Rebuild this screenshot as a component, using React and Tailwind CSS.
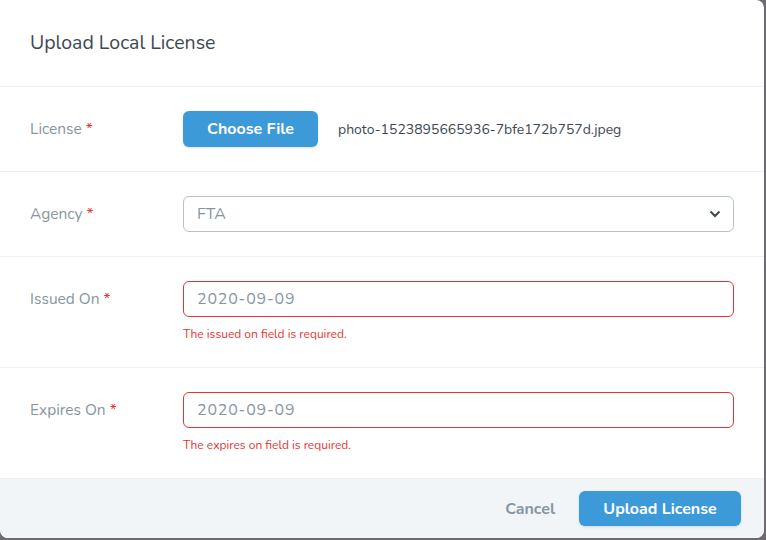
import React from "react";

const font = { fontFamily: "Nunito, Lato, 'Open Sans', sans-serif" };

const Label = ({ children }) => (
  <div className="w-[153px] shrink-0 text-[15.5px] text-[#8795a1]">
    {children} <span className="text-[#e3342f]">*</span>
  </div>
);

const DateField = ({ label, error }) => (
  <div className="flex border-b border-[#eef1f4] px-[30px] pt-[24px] pb-[25px]">
    <div className="flex h-[36px] items-center">
      <Label>{label}</Label>
    </div>
    <div className="flex-1">
      <div className="flex h-[36px] items-center rounded-md border border-[#e3342f] px-[13px] text-[16px] tracking-[0.05em] text-[#8795a1]">
        2020-09-09
      </div>
      <div className="mt-[9px] text-[12px] leading-4 text-[#e3342f]">{error}</div>
    </div>
  </div>
);

const App = () => {
  return (
    <div className="h-[540px] w-[766px] bg-[#6d6a70]" style={font}>
      <div className="flex h-[538px] w-[764px] flex-col overflow-hidden rounded-r-lg rounded-bl-lg bg-white">
        <div className="flex h-[87px] items-center border-b border-[#eef1f4] px-[30px]">
          <h2 className="text-[19.5px] text-[#3d4852]">Upload Local License</h2>
        </div>

        <div className="flex h-[85px] items-center border-b border-[#eef1f4] px-[30px]">
          <Label>License</Label>
          <button className="h-[36px] w-[135px] rounded-md bg-[#3d9ad9] text-[16px] font-bold text-white shadow-sm">
            Choose File
          </button>
          <span className="ml-[20px] text-[14px] text-[#3d4852]">
            photo-1523895665936-7bfe172b757d.jpeg
          </span>
        </div>

        <div className="flex h-[85px] items-center border-b border-[#eef1f4] px-[30px]">
          <Label>Agency</Label>
          <div className="flex h-[36px] flex-1 items-center justify-between rounded-md border border-[#b8c2cc] pl-[13px] pr-[12px] text-[16px] text-[#8795a1]">
            <span>FTA</span>
            <svg width="12" height="8" viewBox="0 0 12 8" fill="none">
              <path d="M1.5 1.5 6 6l4.5-4.5" stroke="#3d4852" strokeWidth="2" />
            </svg>
          </div>
        </div>

        <DateField label="Issued On" error="The issued on field is required." />
        <DateField label="Expires On" error="The expires on field is required." />

        <div className="flex flex-1 items-center justify-end gap-[24px] bg-[#f1f5f8] px-[23px]">
          <button className="text-[16px] font-bold text-[#8795a1]">Cancel</button>
          <button className="h-[35px] w-[162px] rounded-md bg-[#3d9ad9] text-[16px] font-bold text-white shadow-sm">
            Upload License
          </button>
        </div>
      </div>
    </div>
  );
};

export default App;
